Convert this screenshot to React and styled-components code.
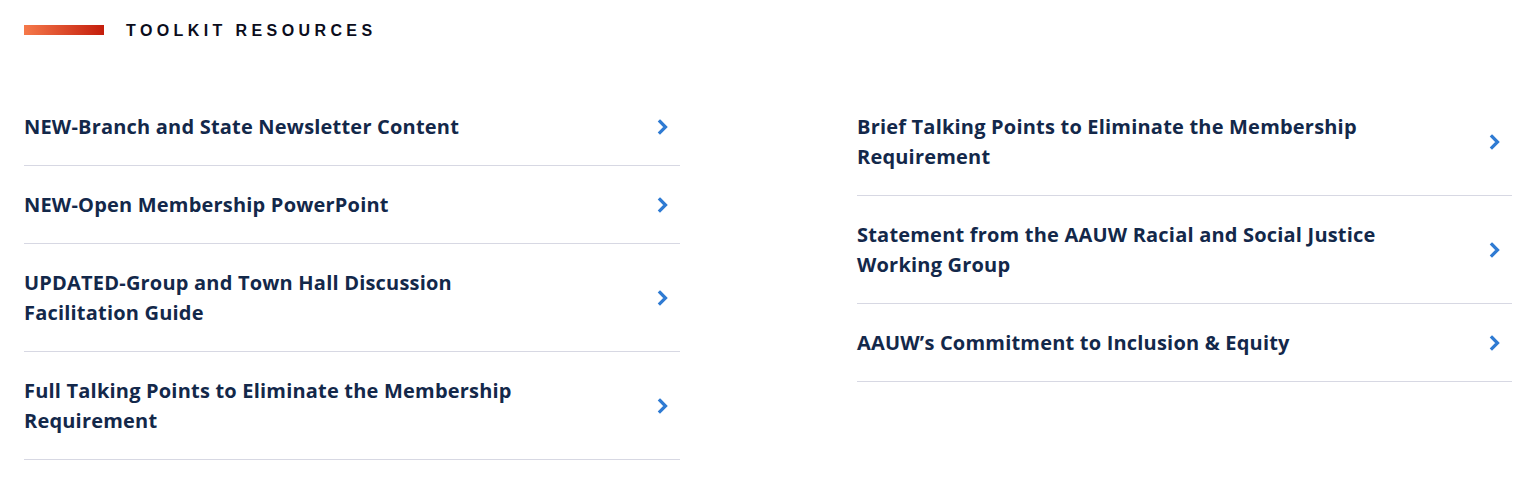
import React from "react";
import styled, { createGlobalStyle } from "styled-components";

const leftItems = [
  "NEW-Branch and State Newsletter Content",
  "NEW-Open Membership PowerPoint",
  "UPDATED-Group and Town Hall Discussion Facilitation Guide",
  "Full Talking Points to Eliminate the Membership Requirement",
];

const rightItems = [
  "Brief Talking Points to Eliminate the Membership Requirement",
  "Statement from the AAUW Racial and Social Justice Working Group",
  "AAUW\u2019s Commitment to Inclusion & Equity",
];

const Chevron = () => (
  <svg width="12" height="16" viewBox="0 0 12 16">
    <polyline
      points="3,2.5 8.5,8 3,13.5"
      fill="none"
      stroke="#2f7bd3"
      strokeWidth="3.2"
      strokeLinecap="square"
      strokeLinejoin="miter"
    />
  </svg>
);

const ResourceList = ({ items }) => (
  <List>
    {items.map((text) => (
      <Item key={text}>
        <ItemText>{text}</ItemText>
        <Chevron />
      </Item>
    ))}
  </List>
);

const App = () => {
  return (
    <Page>
      <GlobalStyle />
      <Header>
        <Bar />
        <Title>Toolkit Resources</Title>
      </Header>
      <Columns>
        <ResourceList items={leftItems} />
        <ResourceList items={rightItems} />
      </Columns>
    </Page>
  );
};

// Styled Components
const GlobalStyle = createGlobalStyle`
  body {
    margin: 0;
    background: #fff;
  }
`;

const Page = styled.div`
  padding: 19px 24px 0 24px;
  font-family: "Open Sans", "Liberation Sans", sans-serif;
`;

const Header = styled.div`
  display: flex;
  align-items: center;
  gap: 22px;
  height: 22px;
`;

const Bar = styled.div`
  width: 80px;
  height: 10px;
  background: linear-gradient(to right, #f5794a, #c41d0c);
`;

const Title = styled.h2`
  margin: 0;
  padding-top: 2px;
  font-family: "Liberation Sans", Arial, sans-serif;
  font-size: 16px;
  font-weight: 700;
  text-transform: uppercase;
  letter-spacing: 4.4px;
  color: #0b0d1c;
`;

const Columns = styled.div`
  display: grid;
  grid-template-columns: 656px 655px;
  column-gap: 177px;
  align-items: start;
  margin-top: 47px;
`;

const List = styled.ul`
  list-style: none;
  margin: 0;
  padding: 0;
`;

const Item = styled.li`
  display: flex;
  align-items: center;
  justify-content: space-between;
  padding: 24px 11px 23px 0;
  border-bottom: 1px solid #d7d8e3;
`;

const ItemText = styled.span`
  max-width: 540px;
  font-size: 20px;
  font-weight: 700;
  line-height: 30px;
  letter-spacing: 0.2px;
  color: #13284a;
`;

export default App;
